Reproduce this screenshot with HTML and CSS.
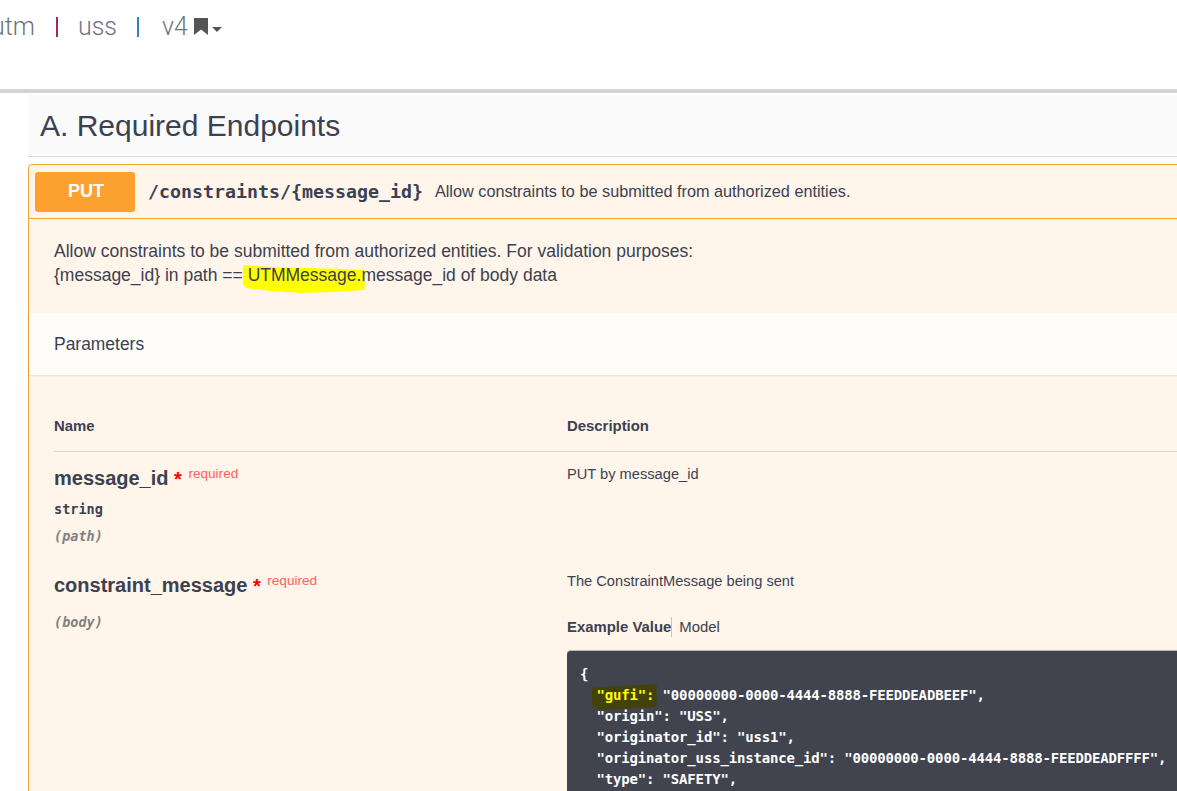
FILE: index.html
```html
<!DOCTYPE html>
<html lang="en">
<head>
<meta charset="utf-8">
<title>utm uss v4</title>
<link rel="stylesheet" href="styles.css">
</head>
<body>
<header class="topbar">
  <span class="crumb crumb-cut">utm</span>
  <span class="sep sep-purple"></span>
  <span class="crumb">uss</span>
  <span class="sep sep-blue"></span>
  <span class="crumb crumb-ver">v4</span>
  <svg class="bookmark" width="14" height="17" viewBox="0 0 14 17"><path d="M0 0H14V17L7 11.5L0 17Z" fill="#555"/></svg>
  <span class="caret"></span>
</header>
<div class="page">
  <h2 class="section">A. Required Endpoints</h2>
  <div class="op">
    <div class="op-head">
      <span class="method">PUT</span>
      <span class="path">/constraints/{message_id}</span>
      <span class="summary">Allow constraints to be submitted from authorized entities.</span>
    </div>
    <div class="desc">
      <p>Allow constraints to be submitted from authorized entities. For validation purposes:</p>
      <p>{message_id} in path == <span class="hl-yellow">UTMMessage.</span>message_id of body data</p>
    </div>
    <div class="params-bar">Parameters</div>
    <div class="table">
      <div class="th-row">
        <div class="col-name">Name</div>
        <div class="col-desc">Description</div>
      </div>
      <div class="param param-first">
        <div class="col-name">
          <div class="pname">message_id <span class="star">*</span><span class="req">required</span></div>
          <div class="ptype">string</div>
          <div class="pin">(path)</div>
        </div>
        <div class="col-desc"><div class="pdesc">PUT by message_id</div></div>
      </div>
      <div class="param">
        <div class="col-name">
          <div class="pname">constraint_message <span class="star">*</span><span class="req">required</span></div>
          <div class="pin pin-body">(body)</div>
        </div>
        <div class="col-desc">
          <div class="pdesc">The ConstraintMessage being sent</div>
          <div class="tabs"><span class="tab-on">Example Value</span><span class="tab-off">Model</span></div>
          <pre class="code">{
  <span class="hl-dark">"gufi":</span> "00000000-0000-4444-8888-FEEDDEADBEEF",
  "origin": "USS",
  "originator_id": "uss1",
  "originator_uss_instance_id": "00000000-0000-4444-8888-FEEDDEADFFFF",
  "type": "SAFETY",</pre>
        </div>
      </div>
    </div>
  </div>
</div>
</body>
</html>
```
FILE: styles.css
```css
* { box-sizing: border-box; }
html, body { margin: 0; padding: 0; height: 791px; overflow: hidden; background: #fff; }
body { font-family: "Liberation Sans", Arial, sans-serif; color: #3b4151; }
.topbar { height: 89px; display: flex; align-items: flex-start; padding-top: 13px; margin-left: -9px; color: #6f7480; font-family: Roboto, sans-serif; font-weight: 300; font-size: 25px; line-height: 28px; }
.crumb-ver { margin-left: 23px; }
.sep { width: 2px; height: 20px; margin: 4px 0 0 20px; }
.sep-purple { background: #a0296a; margin-left: 21px; margin-right: 20px; }
.sep-blue { background: #2f7fc1; margin-left: 20px; }
.bookmark { margin: 5px 0 0 6px; }
.caret { width: 0; height: 0; margin: 14px 0 0 4px; border: 5px solid transparent; border-top-color: #555; border-bottom: 0; }
.page { border-top: 4px solid #d4d4d4; padding: 2px 0 0 28px; width: 1300px; }
.section { margin: 0; height: 62px; background: #fafafa; border-bottom: 1px solid #d5d7da; padding: 14px 0 0 12px; font-weight: 400; font-size: 30px; line-height: 34px; color: #3b4151; }
.op { margin-top: 7px; border: 1px solid #fca130; border-radius: 4px; background: #fff5ea; }
.op-head { display: flex; align-items: center; height: 54px; padding: 0 0 0 6px; border-bottom: 1px solid #fca130; }
.method { width: 100px; height: 40px; padding-left: 2px; background: #fca130; border-radius: 3px; color: #fff; font-weight: 700; font-size: 18px; line-height: 38px; text-align: center; }
.path { margin-left: 13px; font-family: "DejaVu Sans Mono", monospace; font-weight: 700; font-size: 18.27px; color: #3b4151; }
.summary { margin-left: 12px; font-size: 16.25px; color: #3b4151; }
.desc { padding: 20px 0 0 25px; height: 94px; font-size: 17.5px; line-height: 25px; isolation: isolate; }
.desc p { margin: 0; }
.desc p + p { margin-top: -1px; }
.hl-yellow { position: relative; }
.hl-yellow::before { content: ""; position: absolute; z-index: -1; left: -5px; top: 0; width: 123px; height: 29px; background: #ffff00; clip-path: polygon(0 0, 28px 2px, 98px 4px, 122px 5px, 122px 25px, 90px 27px, 58px 28px, 28px 26px, 3px 23px, 0 18px); }
.params-bar { height: 62px; background: #fffdfa; padding-left: 25px; font-size: 17.45px; line-height: 62px; box-shadow: 0 1px 2px rgba(0,0,0,.1); }
.table { padding: 0 0 0 25px; }
.th-row { display: flex; height: 77px; padding-top: 42px; border-bottom: 1px solid #d9d4cf; font-size: 14.9px; font-weight: 700; line-height: 18px; }
.col-name { width: 513px; flex: none; }
.col-desc { flex: 1; }
.param { display: flex; }
.param-first { padding-top: 13px; height: 120px; }
.pname { font-weight: 700; font-size: 20px; line-height: 27px; white-space: nowrap; }
.star { color: #f00; position: relative; top: 1px; }
.req { color: #ff6060; font-size: 13.6px; font-weight: 400; position: relative; top: -7px; margin-left: 6.5px; }
.ptype { margin-top: 6px; font-family: "DejaVu Sans Mono", monospace; font-weight: 700; font-size: 13.5px; line-height: 18px; }
.pin { margin-top: 9px; font-family: "DejaVu Sans Mono", monospace; font-weight: 700; font-style: italic; font-size: 13.5px; line-height: 18px; color: #808080; }
.pin-body { margin-top: 12px; }
.pdesc { font-size: 14.65px; line-height: 18px; }
.tabs { margin-top: 27px; font-size: 14.9px; line-height: 20px; display: flex; }
.tab-on { font-weight: 700; border-right: 1px solid #c5c5c5; }
.tab-off { padding-left: 7px; }
.code { margin: 13px 0 0; height: 200px; padding: 13px 0 0 13px; background: #41444e; border-top: 1px solid #b9b9b9; border-radius: 4px 0 0 0; color: #fff; font-family: "DejaVu Sans Mono", monospace; font-weight: 700; font-size: 14px; letter-spacing: -.17px; line-height: 21px; isolation: isolate; }
.hl-dark { position: relative; color: #ffff00; }
.hl-dark::before { content: ""; position: absolute; z-index: -1; left: -5px; top: -3px; width: 66px; height: 26px; background: #42420a; clip-path: polygon(0 4px, 30px 2px, 65px 0, 65px 23px, 30px 25px, 8px 26px, 0 21px); }
```
